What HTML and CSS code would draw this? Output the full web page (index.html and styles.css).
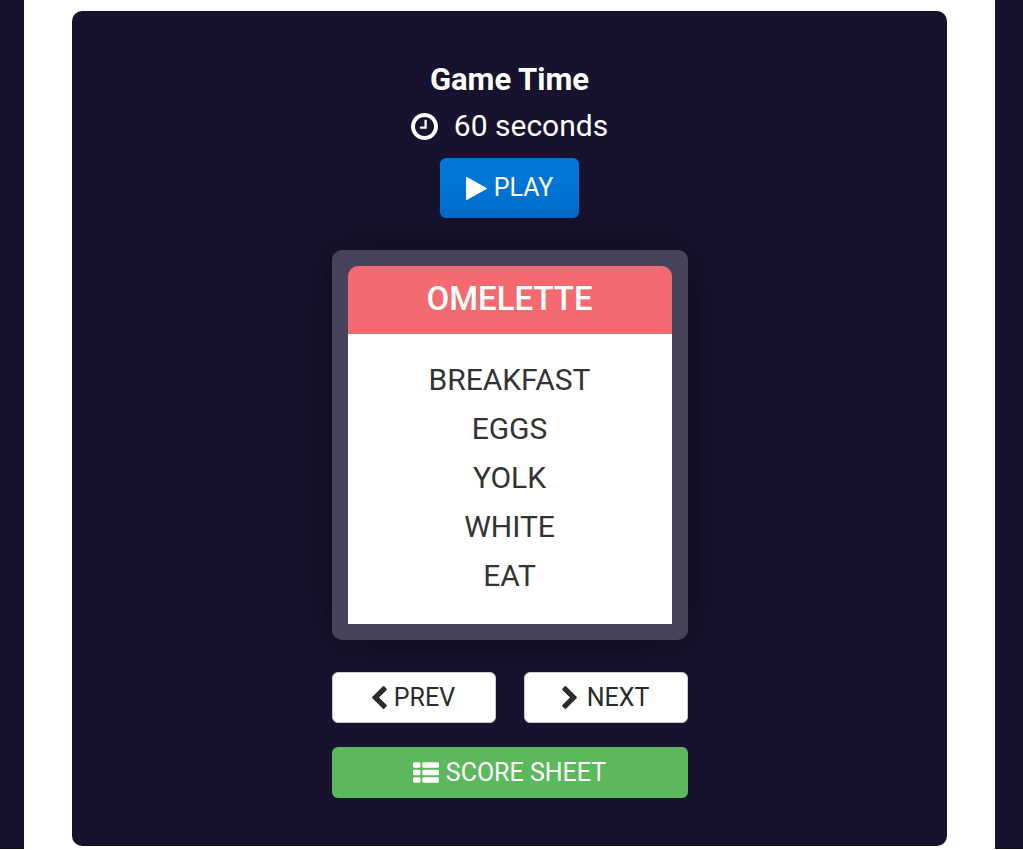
FILE: index.html
```html
<!DOCTYPE html>
<html lang="en">
<head>
<meta charset="utf-8">
<meta name="viewport" content="width=device-width, initial-scale=1">
<title>Game Time</title>
<link rel="stylesheet" href="styles.css">
</head>
<body>
<div class="backdrop">
  <main class="sheet">
    <section class="panel">
      <h1 class="title">Game Time</h1>
      <p class="timer">
        <svg class="icon-clock" viewBox="128 128 1536 1536" aria-hidden="true"><path d="M1024 544v448q0 14-9 23t-23 9h-320q-14 0-23-9t-9-23v-64q0-14 9-23t23-9h224v-352q0-14 9-23t23-9h64q14 0 23 9t9 23zm416 352q0-148-73-273t-198-198-273-73-273 73-198 198-73 273 73 273 198 198 273 73 273-73 198-198 73-273zm224 0q0 209-103 385.5t-279.5 279.5-385.5 103-385.5-103-279.5-279.5-103-385.5 103-385.5 279.5-279.5 385.5-103 385.5 103 279.5 279.5 103 385.5z"/></svg>
        <span>60 seconds</span>
      </p>
      <button class="btn btn-play" type="button">
        <svg class="icon-play" viewBox="192 120 1407 1552" aria-hidden="true"><path d="M1576 927l-1328 738q-23 13-39.5 3t-16.5-36v-1472q0-26 16.5-36t39.5 3l1328 738q23 13 23 31t-23 31z"/></svg>
        <span>PLAY</span>
      </button>
      <div class="deck">
        <article class="card">
          <h2 class="card-head">OMELETTE</h2>
          <ul class="words">
            <li>BREAKFAST</li>
            <li>EGGS</li>
            <li>YOLK</li>
            <li>WHITE</li>
            <li>EAT</li>
          </ul>
        </article>
        <div class="pager">
          <button class="btn btn-light" type="button">
            <svg class="icon-chevron" viewBox="410 26 1036 1612" aria-hidden="true"><path d="M1427 301l-531 531 531 531q19 19 19 45t-19 45l-166 166q-19 19-45 19t-45-19l-742-742q-19-19-19-45t19-45l742-742q19-19 45-19t45 19l166 166q19 19 19 45t-19 45z"/></svg>
            <span>PREV</span>
          </button>
          <button class="btn btn-light btn-next" type="button">
            <svg class="icon-chevron" viewBox="410 26 1036 1612" aria-hidden="true"><path transform="matrix(-1 0 0 1 1856 0)" d="M1427 301l-531 531 531 531q19 19 19 45t-19 45l-166 166q-19 19-45 19t-45-19l-742-742q-19-19-19-45t19-45l742-742q19-19 45-19t45 19l166 166q19 19 19 45t-19 45z"/></svg>
            <span>NEXT</span>
          </button>
        </div>
        <button class="btn btn-score" type="button">
          <svg class="icon-list" viewBox="0 0 1792 1408" aria-hidden="true"><rect width="512" height="384" rx="96"/><rect x="640" width="1152" height="384" rx="96"/><rect y="512" width="512" height="384" rx="96"/><rect x="640" y="512" width="1152" height="384" rx="96"/><rect y="1024" width="512" height="384" rx="96"/><rect x="640" y="1024" width="1152" height="384" rx="96"/></svg>
          <span>SCORE SHEET</span>
        </button>
      </div>
    </section>
  </main>
</div>
</body>
</html>
```
FILE: styles.css
```css
* {
  box-sizing: border-box;
}

body {
  margin: 0;
  background: #fff;
  font-family: Roboto, "Liberation Sans", sans-serif;
  font-size: 30px;
  color: #fff;
}

svg {
  flex: none;
  fill: currentColor;
}

.backdrop {
  padding: 0 28px 0 24px;
  background: #17132f;
}

.sheet {
  padding: 11px 48px 3px;
  background: #fff;
}

.panel {
  display: flex;
  flex-direction: column;
  align-items: center;
  padding: 46px 24px 48px;
  border-radius: 10px;
  background: #17132f;
}

.title {
  margin: 0;
  font-size: 31px;
  font-weight: 700;
  line-height: 46px;
}

.timer {
  display: flex;
  align-items: center;
  gap: 16px;
  margin: 0 0 9px;
  line-height: 46px;
}

.icon-clock {
  width: 27px;
  height: 27px;
}

.btn {
  display: flex;
  align-items: center;
  justify-content: center;
  gap: 7px;
  height: 51px;
  padding: 0 24px;
  border: 1px solid transparent;
  border-radius: 6px;
  font: 400 25px/36px Roboto, "Liberation Sans", sans-serif;
  color: #fff;
  cursor: pointer;
}

.btn-play {
  height: 60px;
  padding: 0 26px;
  border: 0;
  background: linear-gradient(#0275d8 40%, #026fce);
}

.icon-play {
  width: 21px;
  height: 23px;
}

.deck {
  width: 100%;
  max-width: 356px;
  margin-top: 32px;
}

.card {
  padding: 16px;
  border-radius: 10px;
  background: #46435a;
  box-shadow: 0 0 48px rgba(11, 11, 16, 0.7);
}

.card-head {
  margin: 0;
  padding: 9px 0 11px;
  border-radius: 10px 10px 0 0;
  background: #f36a71;
  font-size: 33px;
  font-weight: 500;
  line-height: 48px;
  text-align: center;
}

.words {
  margin: 0;
  padding: 21px 0 24px;
  background: #fff;
  color: #333;
  list-style: none;
  line-height: 49px;
  text-align: center;
}

.pager {
  display: grid;
  grid-template-columns: 1fr 1fr;
  gap: 28px;
  margin: 32px 0 24px;
}

.btn-light {
  border-color: #ccc;
  background: #fff;
  color: #292b2c;
}

.btn-next {
  gap: 10px;
}

.icon-chevron {
  width: 15px;
  height: 23px;
}

.btn-score {
  width: 100%;
  border: 0;
  background: #5cb85c;
}

.icon-list {
  width: 26px;
  height: 21px;
}
```
